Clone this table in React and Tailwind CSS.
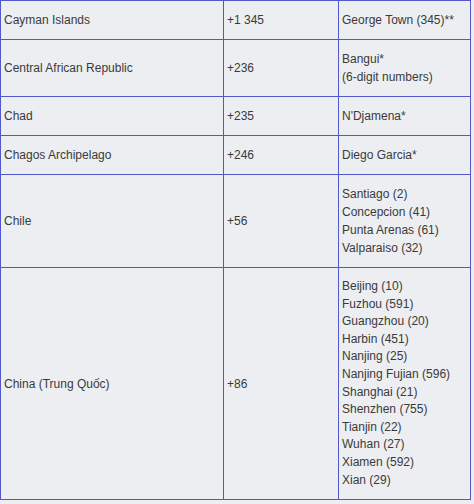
import React from 'react';

const rows = [
  { country: 'Cayman Islands', code: '+1 345', cities: ['George Town (345)**'] },
  { country: 'Central African Republic', code: '+236', cities: ['Bangui*', '(6-digit numbers)'] },
  { country: 'Chad', code: '+235', cities: ["N'Djamena*"] },
  { country: 'Chagos Archipelago', code: '+246', cities: ['Diego Garcia*'] },
  {
    country: 'Chile',
    code: '+56',
    cities: ['Santiago (2)', 'Concepcion (41)', 'Punta Arenas (61)', 'Valparaiso (32)'],
  },
  {
    country: 'China (Trung Quốc)',
    code: '+86',
    tight: true,
    cities: [
      'Beijing (10)',
      'Fuzhou (591)',
      'Guangzhou (20)',
      'Harbin (451)',
      'Nanjing (25)',
      'Nanjing Fujian (596)',
      'Shanghai (21)',
      'Shenzhen (755)',
      'Tianjin (22)',
      'Wuhan (27)',
      'Xiamen (592)',
      'Xian (29)',
    ],
  },
];

const App = () => {
  return (
    <div className="w-[474px] h-[504px] overflow-hidden bg-[#eceef2]" style={{ fontFamily: '"Liberation Sans", Arial, sans-serif' }}>
      <table className="w-[471px] border-collapse text-[12px] leading-[18px] text-[#3a3a3a] table-fixed">
        <colgroup>
          <col className="w-[223px]" />
          <col className="w-[115px]" />
          <col />
        </colgroup>
        <tbody>
          {rows.map((r) => (
            <tr key={r.country}>
              <td className="border border-[#5157cc] px-[3px] py-[10px] align-middle">{r.country}</td>
              <td className="border border-[#5157cc] px-[3px] py-[10px] align-middle">{r.code}</td>
              <td className={`border border-[#5157cc] px-[3px] py-[10px] align-middle ${r.tight ? 'leading-[17.6px]' : ''}`}>
                {r.cities.map((c) => (
                  <div key={c}>{c}</div>
                ))}
              </td>
            </tr>
          ))}
        </tbody>
      </table>
    </div>
  );
};

export default App;
